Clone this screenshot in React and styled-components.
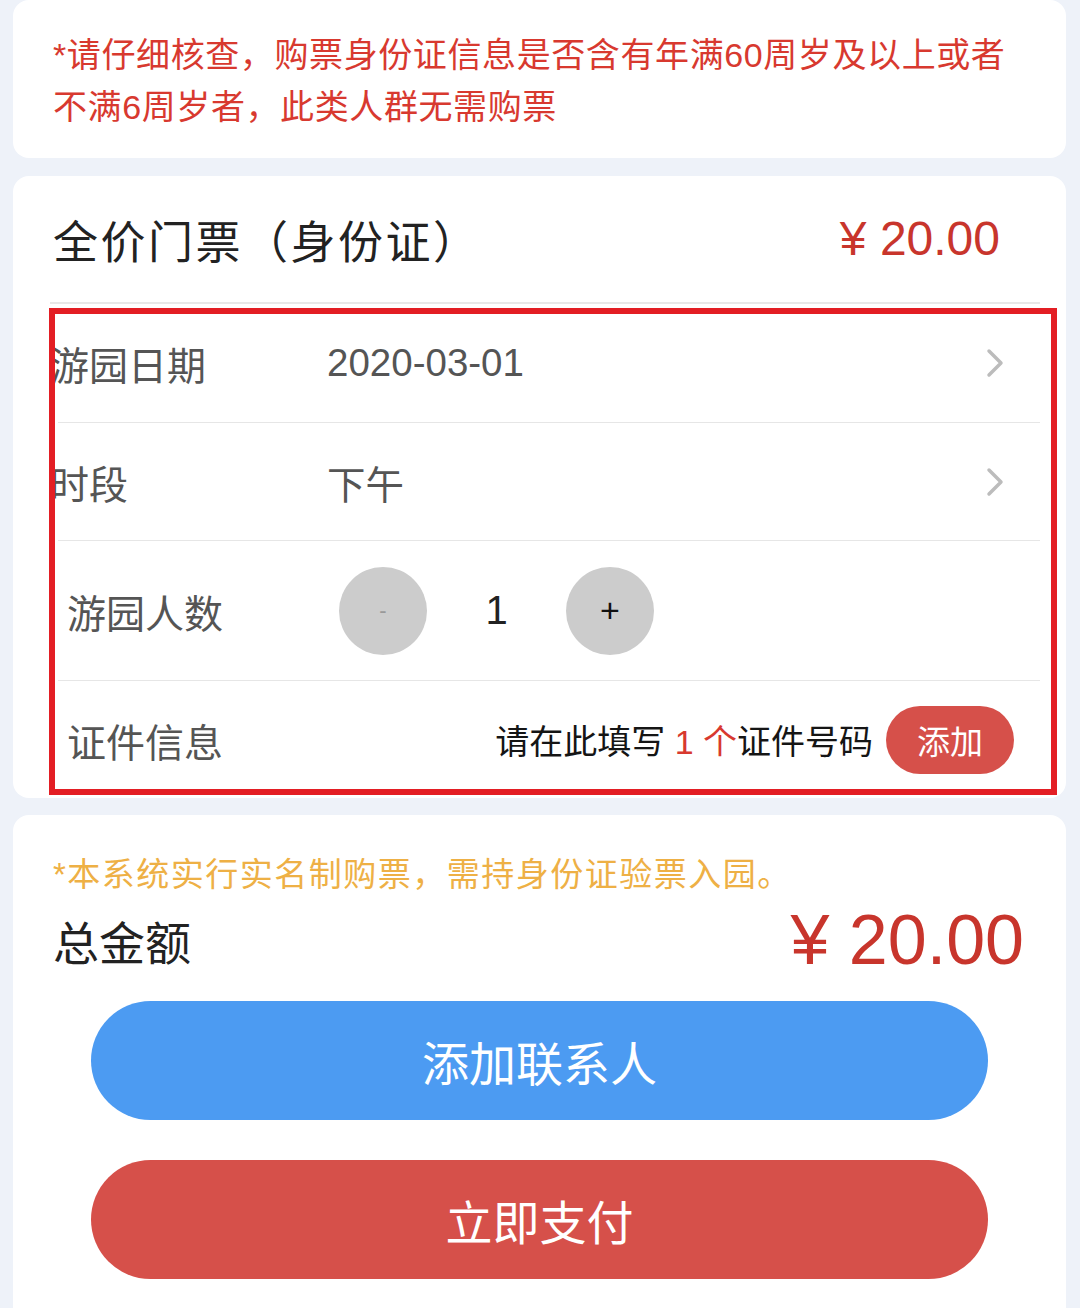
import React, { useState } from "react";
import styled, { createGlobalStyle } from "styled-components";

const GlobalStyle = createGlobalStyle`
  body {
    margin: 0;
    background-color: #eef2f9;
    font-family: "Liberation Sans", "Noto Sans CJK SC", sans-serif;
    text-spacing-trim: space-all;
  }
`;

const Page = styled.div`
  width: 1080px;
  padding: 0 14px 0 13px;
  box-sizing: border-box;

  display: flex;
  flex-direction: column;
  gap: 17px;
`;

const Card = styled.div`
  background-color: #ffffff;
  border-radius: 16px;
`;

const NoticeCard = styled(Card)`
  padding: 29px 30px 25px 40px;
  margin-bottom: 1px;
`;

const NoticeText = styled.p`
  margin: 0;
  color: #d8392f;
  font-size: 34px;
  line-height: 52px;
  letter-spacing: 0.6px;
`;

const TicketHeader = styled.div`
  height: 128px;
  margin: 0 26px 0 37px;
  padding: 0 40px 0 3px;
  border-bottom: 2px solid #e8e8e8;
  box-sizing: border-box;

  display: flex;
  align-items: center;
  justify-content: space-between;
`;

const TicketTitle = styled.h2`
  margin: 0;
  color: #222222;
  font-size: 45px;
  font-weight: 400;
  letter-spacing: 2.5px;
`;

const Price = styled.span`
  color: #c8352c;
  font-size: ${(p) => p.$size}px;
  line-height: 1;
`;

const RowsArea = styled.div`
  position: relative;
  margin: 0 26px 0 45px;

  /* red annotation frame over the rows */
  &::after {
    content: "";
    position: absolute;
    top: 4px;
    bottom: 3px;
    left: -9px;
    right: -17px;
    border: 6px solid #e31e24;
    pointer-events: none;
  }
`;

const Row = styled.div`
  height: ${(p) => p.$height}px;
  border-top: ${(p) => (p.$first ? "none" : "1.5px solid #e6e6e6")};
  box-sizing: border-box;

  display: flex;
  align-items: center;
`;

const Label = styled.span`
  flex: 0 0 269px;
  text-indent: ${(p) => p.$indent}px;
  color: #555555;
  font-size: 39px;
  white-space: nowrap;
`;

const Value = styled.span`
  flex: 1;
  color: #555555;
  font-size: 38.5px;
`;

const Chevron = styled.svg`
  width: 18px;
  height: 30px;
  margin-right: 36px;
`;

const Stepper = styled.div`
  display: flex;
  align-items: center;
  margin-left: 12px;
`;

const StepButton = styled.button`
  width: 88px;
  height: 88px;
  border: none;
  border-radius: 50%;
  background-color: #cccccc;
  padding: 0;

  display: flex;
  align-items: center;
  justify-content: center;

  color: ${(p) => (p.$muted ? "#999999" : "#111111")};
  font-family: "Liberation Sans", sans-serif;
  font-size: ${(p) => (p.$muted ? "22px" : "34px")};
  cursor: pointer;
`;

const Count = styled.span`
  width: 139px;
  text-align: center;
  color: #222222;
  font-size: 40px;
`;

const IdHint = styled.span`
  margin-left: auto;
  color: #151515;
  font-size: 34px;
`;

const HintNum = styled.span`
  color: #d8392f;
`;

const AddButton = styled.button`
  width: 128px;
  height: 68px;
  margin: 0 26px 0 13px;
  border: none;
  border-radius: 34px;
  background-color: #d6504a;

  color: #ffffff;
  font-family: "Liberation Sans", "Noto Sans CJK SC", sans-serif;
  font-size: 33px;
  cursor: pointer;
`;

const TotalCard = styled(Card)`
  padding: 38px 42px 40px 40px;
  border-bottom-left-radius: 0;
  border-bottom-right-radius: 0;
`;

const RealNameNote = styled.p`
  margin: 0;
  color: #eeb045;
  font-size: 33px;
  line-height: 44px;
  letter-spacing: 1.5px;
`;

const TotalRow = styled.div`
  height: 70px;
  margin-top: 8px;

  display: flex;
  align-items: center;
  justify-content: space-between;
`;

const TotalLabel = styled.span`
  color: #222222;
  font-size: 46px;
`;

const ActionButton = styled.button`
  display: block;
  width: 897px;
  height: 119px;
  margin: ${(p) => p.$top}px 0 0 38px;
  border: none;
  border-radius: 60px;
  background-color: ${(p) => p.$bg};

  color: #ffffff;
  font-family: "Liberation Sans", "Noto Sans CJK SC", sans-serif;
  font-size: 47px;
  cursor: pointer;
`;

const ChevronIcon = () => (
  <Chevron viewBox="0 0 18 30">
    <polyline
      points="3,3 15,15 3,27"
      fill="none"
      stroke="#bcbcbc"
      strokeWidth="3.5"
      strokeLinecap="round"
      strokeLinejoin="round"
    />
  </Chevron>
);

export default function App() {
  const [count, setCount] = useState(1);

  return (
    <>
      <GlobalStyle />
      <Page>
        <NoticeCard>
          <NoticeText>
            *请仔细核查，购票身份证信息是否含有年满60周岁及以上或者
            不满6周岁者，此类人群无需购票
          </NoticeText>
        </NoticeCard>

        <Card>
          <TicketHeader>
            <TicketTitle>全价门票（身份证）</TicketTitle>
            <Price $size={48}>¥ 20.00</Price>
          </TicketHeader>

          <RowsArea>
            <Row $height={118} $first>
              <Label $indent={-8}>游园日期</Label>
              <Value>2020-03-01</Value>
              <ChevronIcon />
            </Row>
            <Row $height={118}>
              <Label $indent={-8}>时段</Label>
              <Value>下午</Value>
              <ChevronIcon />
            </Row>
            <Row $height={140}>
              <Label $indent={9}>游园人数</Label>
              <Stepper>
                <StepButton $muted onClick={() => setCount(Math.max(1, count - 1))}>
                  -
                </StepButton>
                <Count>{count}</Count>
                <StepButton onClick={() => setCount(count + 1)}>+</StepButton>
              </Stepper>
            </Row>
            <Row $height={118}>
              <Label $indent={9}>证件信息</Label>
              <IdHint>
                请在此填写 <HintNum>{count} 个</HintNum>证件号码
              </IdHint>
              <AddButton>添加</AddButton>
            </Row>
          </RowsArea>
        </Card>

        <TotalCard>
          <RealNameNote>*本系统实行实名制购票，需持身份证验票入园。</RealNameNote>
          <TotalRow>
            <TotalLabel>总金额</TotalLabel>
            <Price $size={70}>¥ 20.00</Price>
          </TotalRow>
          <ActionButton $bg="#4c9bf2" $top={26}>
            添加联系人
          </ActionButton>
          <ActionButton $bg="#d6504a" $top={40}>
            立即支付
          </ActionButton>
        </TotalCard>
      </Page>
    </>
  );
}
